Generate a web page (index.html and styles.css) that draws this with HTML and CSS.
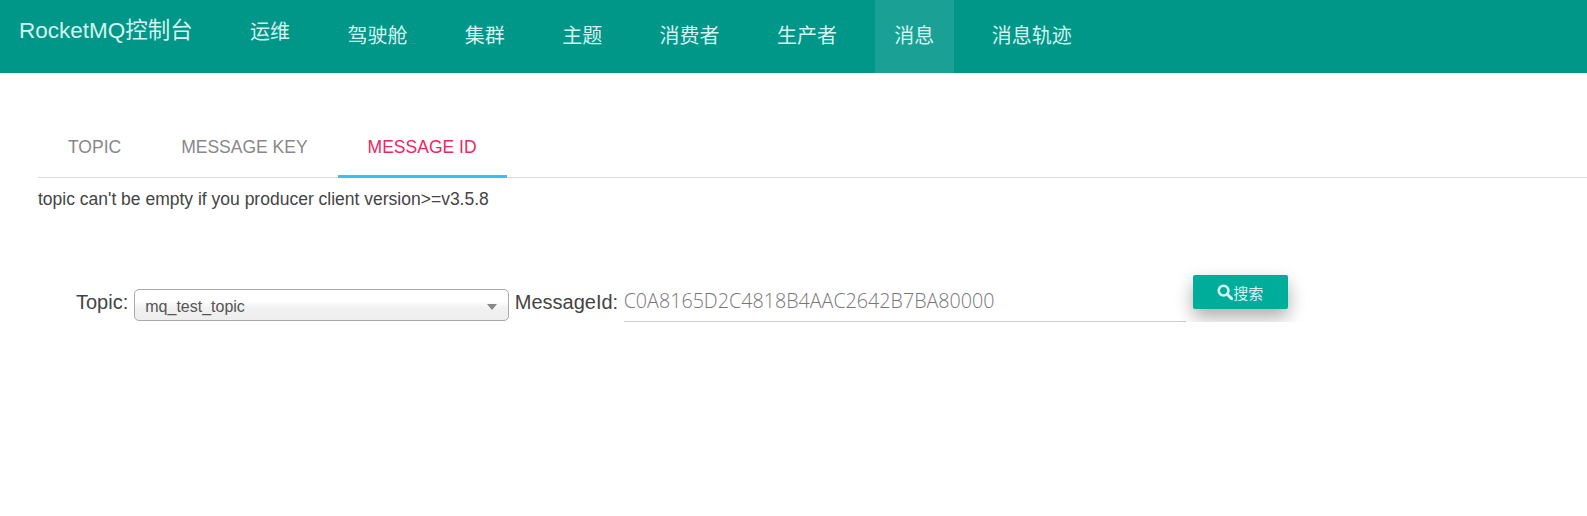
FILE: index.html
```html
<!DOCTYPE html>
<html lang="zh-CN">

<head>
  <meta charset="UTF-8">
  <title>RocketMQ控制台</title>
  <link rel="stylesheet" href="styles.css">
</head>

<body>
  <nav class="navbar">
    <a class="brand" href="#">RocketMQ控制台</a>
    <ul class="nav-list">
      <li class="nav-item nav-item-first">运维</li>
      <li class="nav-item">驾驶舱</li>
      <li class="nav-item">集群</li>
      <li class="nav-item">主题</li>
      <li class="nav-item">消费者</li>
      <li class="nav-item">生产者</li>
      <li class="nav-item active">消息</li>
      <li class="nav-item">消息轨迹</li>
    </ul>
  </nav>

  <div class="container">
    <div class="tabs">
      <div class="tab">TOPIC</div>
      <div class="tab">MESSAGE KEY</div>
      <div class="tab tab-active">MESSAGE ID</div>
    </div>
    <p class="hint">topic can't be empty if you producer client version&gt;=v3.5.8</p>

    <form class="search-form">
      <label class="field-label">Topic:</label>
      <div class="select">
        <span>mq_test_topic</span>
        <i class="select-arrow"></i>
      </div>
      <label class="field-label field-label-id">MessageId:</label>
      <div class="id-input">C0A8165D2C4818B4AAC2642B7BA80000</div>
      <button class="btn" type="button">
        <svg class="btn-icon" viewBox="0 0 16 16" width="16" height="16">
          <circle cx="6.6" cy="6.6" r="4.9" fill="none" stroke="currentColor" stroke-width="2.6"/>
          <path d="M10.2 10.2L14.6 14.6" stroke="currentColor" stroke-width="3" stroke-linecap="round"/>
        </svg>搜索
      </button>
    </form>
  </div>
</body>

</html>
```

FILE: styles.css
```css
* {
  box-sizing: border-box;
}

body {
  font-family: "Liberation Sans", "Noto Sans CJK SC", sans-serif;
  background: #fff;
  color: #444;
  margin: 0;
}

.navbar {
  display: flex;
  height: 73px;
  background: #009688;
}

.brand {
  color: #d5f3ef;
  font-size: 22.5px;
  line-height: 30px;
  padding: 16px 0 0 19px;
  width: 230.5px;
  text-decoration: none;
}

.nav-list {
  display: flex;
  list-style: none;
  margin: 0;
  padding: 0;
}

.nav-item {
  color: #d5f3ef;
  font-size: 20px;
  line-height: 28px;
  padding: 22px 19.5px 0;
  margin-right: 18.4px;
  height: 73px;
}

.nav-item-first {
  padding-top: 18px;
}

.nav-item.active {
  background: rgba(255, 255, 255, 0.1);
}

.container {
  padding: 50px 0 0 38px;
}

.tabs {
  display: flex;
  border-bottom: 1px solid #ddd;
  height: 55px;
}

.tab {
  color: #888;
  font-size: 17.5px;
  line-height: 48px;
  padding: 0 30px;
  height: 55px;
}

.tab-active {
  color: #f0255f;
  border-bottom: 3px solid #35c2fb;
}

.hint {
  font-size: 17.5px;
  line-height: 22px;
  margin: 10px 0 0;
}

.search-form {
  display: flex;
  align-items: flex-start;
  margin: 63px 0 0 38px;
}

.field-label {
  font-size: 20px;
  line-height: 24px;
  margin: 17px 6px 0 0;
}

.field-label-id {
  margin-left: 5.5px;
  margin-right: 5.5px;
}

.select {
  display: flex;
  align-items: center;
  justify-content: space-between;
  width: 375px;
  height: 32px;
  margin-top: 16px;
  padding: 3px 11px 0 10px;
  border: 1px solid #aaa;
  border-radius: 5px;
  background: linear-gradient(#fff 35%, #f1f1f1 60%, #eee);
  color: #555;
  font-size: 16px;
}

.select-arrow {
  border-top: 6px solid #888;
  border-left: 5px solid transparent;
  border-right: 5px solid transparent;
}

.id-input {
  width: 562px;
  height: 38px;
  margin-top: 11px;
  border-bottom: 1px solid #ccc;
  color: #777;
  font-family: "Open Sans", sans-serif;
  font-weight: 300;
  font-size: 19.7px;
  line-height: 34px;
}

.btn {
  display: flex;
  align-items: center;
  justify-content: center;
  width: 95px;
  height: 34px;
  margin: 2px 0 0 7px;
  padding: 0;
  border: none;
  border-radius: 2px;
  background: #00ad9a;
  color: #d5f3ef;
  font-family: "Liberation Sans", "Noto Sans CJK SC", sans-serif;
  font-size: 15px;
  box-shadow: 0 8px 18px rgba(0, 0, 0, 0.33);
}
```
